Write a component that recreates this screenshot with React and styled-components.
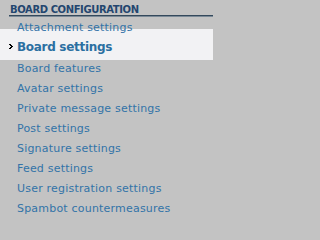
import styled, { createGlobalStyle } from "styled-components";

const GlobalStyle = createGlobalStyle`
  html, body {
    margin: 0;
    padding: 0;
    background: #c3c3c3;
  }
`;

const items = [
  "Attachment settings",
  "Board settings",
  "Board features",
  "Avatar settings",
  "Private message settings",
  "Post settings",
  "Signature settings",
  "Feed settings",
  "User registration settings",
  "Spambot countermeasures",
];

const Menu = styled.div`
  width: 213px;
  height: 225px;
  background: #c3c3c3;
  font-family: "DejaVu Sans", Verdana, sans-serif;
  overflow: hidden;
`;

const Heading = styled.div`
  margin: 0 0 0 9px;
  padding: 5px 0 0 1px;
  height: 16px;
  box-sizing: border-box;
  font-size: 10px;
  font-weight: bold;
  letter-spacing: -0.4px;
  color: #23466f;
  border-bottom: 1px solid #34495c;
  box-shadow: 0 1px 0 #7b8a97;
  line-height: 10px;
`;

const List = styled.ul`
  list-style: none;
  margin: 1px 0 0;
  padding: 0;
`;

const Item = styled.li`
  display: flex;
  align-items: center;
  box-sizing: border-box;
  height: 20px;
  padding-left: 17px;
  color: #3273a8;
  font-size: 11px;
  letter-spacing: 0.2px;
  white-space: nowrap;
`;

const ActiveItem = styled(Item)`
  height: 31px;
  margin: -8px 0 -2px;
  padding-top: 5px;
  padding-left: 8px;
  background: #f2f2f4;
  color: #2b6fa1;
  font-size: 12px;
  font-weight: bold;
  letter-spacing: -0.3px;
`;

const Marker = styled.svg`
  flex: none;
  width: 4px;
  height: 5px;
  margin: -1px 4px 0 1px;
`;

const Chevron = () => (
  <Marker viewBox="0 0 4 5" shapeRendering="crispEdges">
    <rect x="0" y="0" width="2" height="1" fill="#000" />
    <rect x="1" y="1" width="2" height="1" fill="#000" />
    <rect x="2" y="2" width="2" height="1" fill="#000" />
    <rect x="1" y="3" width="2" height="1" fill="#000" />
    <rect x="0" y="4" width="2" height="1" fill="#000" />
  </Marker>
);

export default function App() {
  return (
    <>
      <GlobalStyle />
      <Menu>
        <Heading>BOARD CONFIGURATION</Heading>
        <List>
          {items.map((label, i) =>
            i === 1 ? (
              <ActiveItem key={label}>
                <Chevron />
                {label}
              </ActiveItem>
            ) : (
              <Item key={label}>{label}</Item>
            )
          )}
        </List>
      </Menu>
    </>
  );
}
